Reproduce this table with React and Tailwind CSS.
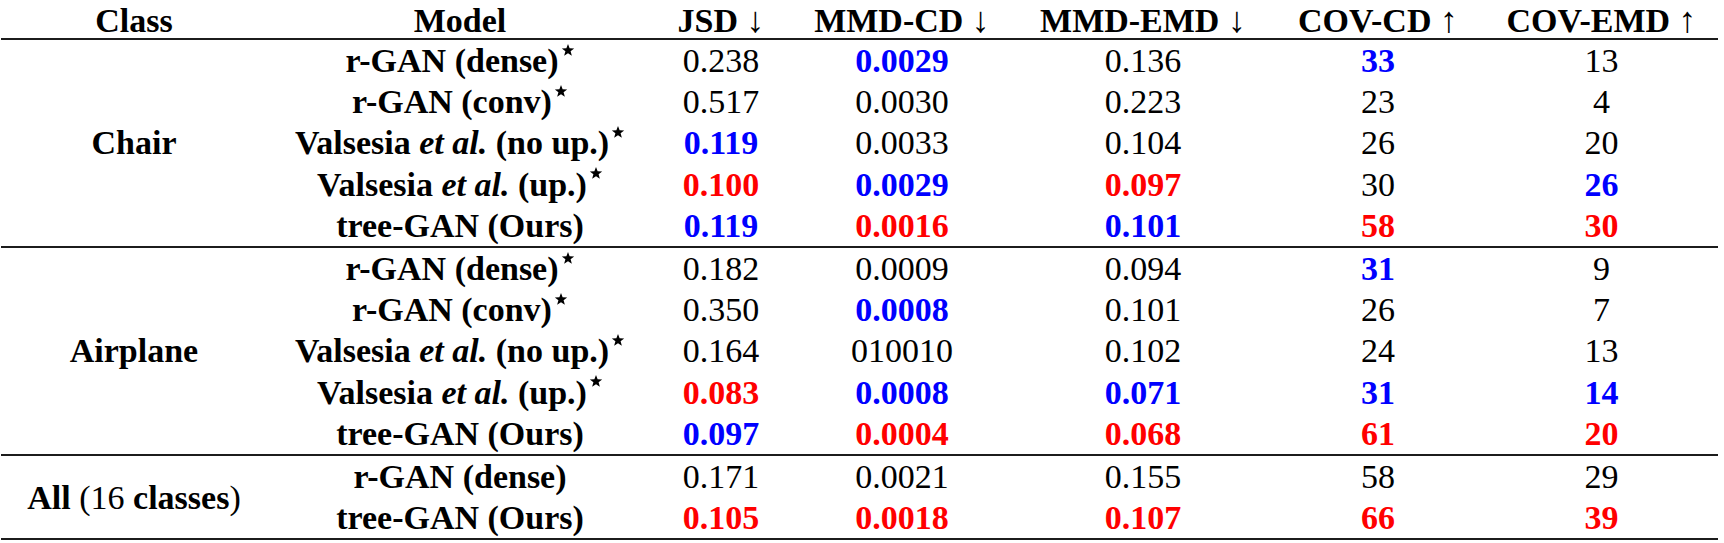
import React from "react";

const cols = "grid grid-cols-[266px_386px_136px_226px_256px_214px_233px]";

const blocks = [
  {
    name: "Chair",
    rows: [
      ["r-GAN (dense)", true, ["0.238", ""], ["0.0029", "b"], ["0.136", ""], ["33", "b"], ["13", ""]],
      ["r-GAN (conv)", true, ["0.517", ""], ["0.0030", ""], ["0.223", ""], ["23", ""], ["4", ""]],
      ["valsesia-no", true, ["0.119", "b"], ["0.0033", ""], ["0.104", ""], ["26", ""], ["20", ""]],
      ["valsesia-up", true, ["0.100", "r"], ["0.0029", "b"], ["0.097", "r"], ["30", ""], ["26", "b"]],
      ["tree-GAN (Ours)", false, ["0.119", "b"], ["0.0016", "r"], ["0.101", "b"], ["58", "r"], ["30", "r"]],
    ],
  },
  {
    name: "Airplane",
    rows: [
      ["r-GAN (dense)", true, ["0.182", ""], ["0.0009", ""], ["0.094", ""], ["31", "b"], ["9", ""]],
      ["r-GAN (conv)", true, ["0.350", ""], ["0.0008", "b"], ["0.101", ""], ["26", ""], ["7", ""]],
      ["valsesia-no", true, ["0.164", ""], ["010010", ""], ["0.102", ""], ["24", ""], ["13", ""]],
      ["valsesia-up", true, ["0.083", "r"], ["0.0008", "b"], ["0.071", "b"], ["31", "b"], ["14", "b"]],
      ["tree-GAN (Ours)", false, ["0.097", "b"], ["0.0004", "r"], ["0.068", "r"], ["61", "r"], ["20", "r"]],
    ],
  },
  {
    name: "all",
    rows: [
      ["r-GAN (dense)", false, ["0.171", ""], ["0.0021", ""], ["0.155", ""], ["58", ""], ["29", ""]],
      ["tree-GAN (Ours)", false, ["0.105", "r"], ["0.0018", "r"], ["0.107", "r"], ["66", "r"], ["39", "r"]],
    ],
  },
];

function Star() {
  return (
    <svg
      className="inline-block align-[0.45em] ml-[2px]"
      width="14"
      height="14"
      viewBox="0 0 20 20"
    >
      <path
        d="M10 1.5 L12.3 7.6 L18.8 7.9 L13.7 11.9 L15.5 18.2 L10 14.6 L4.5 18.2 L6.3 11.9 L1.2 7.9 L7.7 7.6 Z"
        fill="#000"
      />
    </svg>
  );
}

function ModelName({ id, star }) {
  let label;
  if (id === "valsesia-no" || id === "valsesia-up") {
    label = (
      <>
        Valsesia <i>et al.</i> {id === "valsesia-no" ? "(no up.)" : "(up.)"}
      </>
    );
  } else {
    label = id;
  }
  return (
    <span className="font-bold whitespace-nowrap">
      {label}
      {star && <Star />}
    </span>
  );
}

function Cell({ value, mark }) {
  const color =
    mark === "b" ? "text-[#0000ff] font-bold" : mark === "r" ? "text-[#ff0000] font-bold" : "text-black";
  return <div className={`text-center ${color}`}>{value}</div>;
}

function ClassLabel({ name }) {
  if (name === "all") {
    return (
      <span className="whitespace-nowrap">
        <b>All</b> (16 <b>classes</b>)
      </span>
    );
  }
  return <b>{name}</b>;
}

function Block({ block }) {
  return (
    <div className={`${cols} border-t-2 border-[#1c1c1c]`}>
      <div
        className="flex items-center justify-center"
        style={{ gridRow: `span ${block.rows.length}` }}
      >
        <ClassLabel name={block.name} />
      </div>
      {block.rows.map((r, i) => (
        <React.Fragment key={i}>
          <div className="h-[41.2px] text-center">
            <ModelName id={r[0]} star={r[1]} />
          </div>
          {r.slice(2).map((c, j) => (
            <Cell key={j} value={c[0]} mark={c[1]} />
          ))}
        </React.Fragment>
      ))}
    </div>
  );
}

export default function App() {
  const headers = ["JSD ↓", "MMD-CD ↓", "MMD-EMD ↓", "COV-CD ↑", "COV-EMD ↑"];
  return (
    <div className="w-[1724px] h-[543px] bg-white overflow-hidden">
      <div className="ml-[1px] w-[1717px] text-[34px] leading-[41.2px] text-black font-[family-name:Liberation_Serif,serif]">
        <div className={`${cols} h-[38px] items-end`}>
          <div className="text-center font-bold">Class</div>
          <div className="text-center font-bold">Model</div>
          {headers.map((h) => {
            const [label, arrow] = h.split(" ");
            return (
              <div key={h} className="text-center whitespace-nowrap">
                <b>{label}</b> <span className="font-normal text-[36px]">{arrow}</span>
              </div>
            );
          })}
        </div>
        {blocks.map((b) => (
          <Block key={b.name} block={b} />
        ))}
        <div className="border-t-2 border-[#1c1c1c]" />
      </div>
    </div>
  );
}
